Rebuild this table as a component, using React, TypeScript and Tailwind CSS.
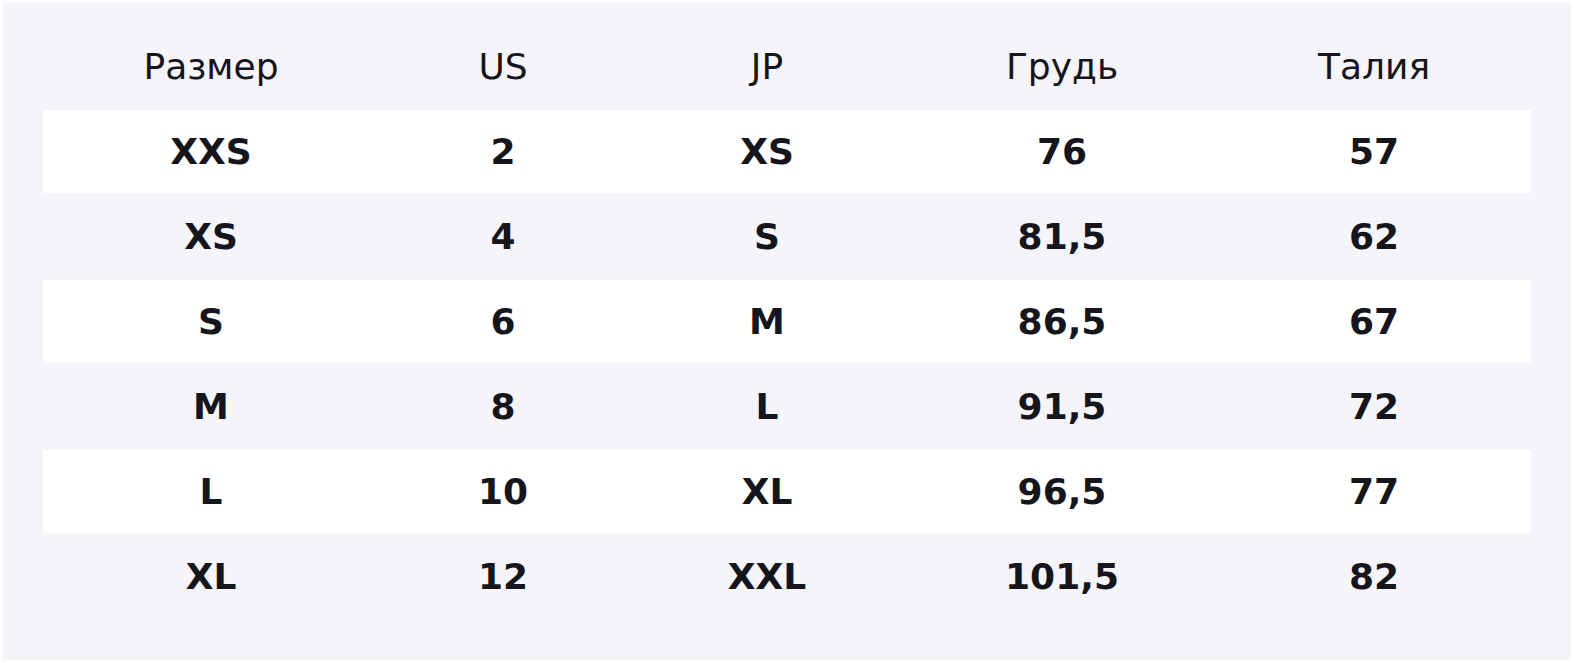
import React from "react";

const headers = ["Размер", "US", "JP", "Грудь", "Талия"];
const rows = [
  ["XXS", "2", "XS", "76", "57"],
  ["XS", "4", "S", "81,5", "62"],
  ["S", "6", "M", "86,5", "67"],
  ["M", "8", "L", "91,5", "72"],
  ["L", "10", "XL", "96,5", "77"],
  ["XL", "12", "XXL", "101,5", "82"],
];

const cols = "grid grid-cols-[336px_248px_280px_310px_314px]";

export default function App() {
  return (
    <div
      className="w-[1574px] h-[663px] bg-white p-[3px]"
      style={{ fontFamily: '"DejaVu Sans", Verdana, sans-serif' }}
    >
      <div className="w-[1568px] h-[657px] bg-[#f4f4f9] px-[40px] pt-[40px] text-[#15151c]">
        <div className={`${cols} h-[67px] items-start`}>
          {headers.map((h) => (
            <div key={h} className="text-center text-[36px] leading-[42px] pt-[3px]">
              {h}
            </div>
          ))}
        </div>
        {rows.map((r, i) => (
          <div
            key={i}
            className={`${cols} items-center ${i % 2 === 0 ? "bg-white h-[83px]" : "h-[87px]"}`}
          >
            {r.map((c, j) => (
              <div key={j} className="text-center text-[36px] font-bold leading-[42px]">
                {c}
              </div>
            ))}
          </div>
        ))}
      </div>
    </div>
  );
}
